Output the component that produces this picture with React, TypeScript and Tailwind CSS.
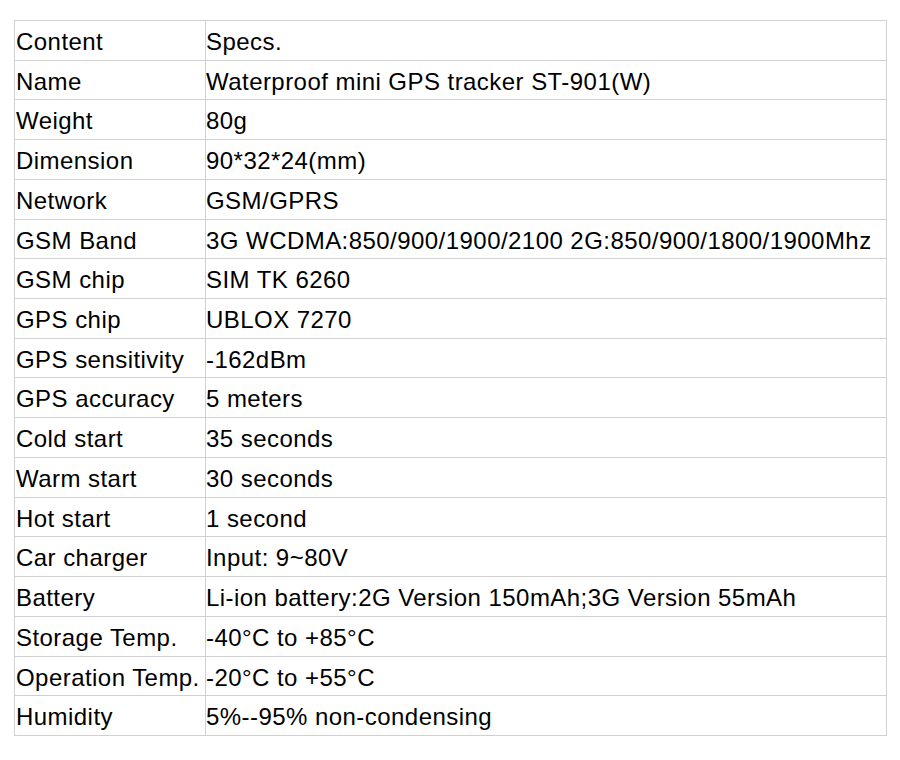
const rows: [string, string][] = [
  ["Content", "Specs."],
  ["Name", "Waterproof mini GPS tracker ST-901(W)"],
  ["Weight", "80g"],
  ["Dimension", "90*32*24(mm)"],
  ["Network", "GSM/GPRS"],
  ["GSM Band", "3G WCDMA:850/900/1900/2100 2G:850/900/1800/1900Mhz"],
  ["GSM chip", "SIM TK 6260"],
  ["GPS chip", "UBLOX 7270"],
  ["GPS sensitivity", "-162dBm"],
  ["GPS accuracy", "5 meters"],
  ["Cold start", "35 seconds"],
  ["Warm start", "30 seconds"],
  ["Hot start", "1 second"],
  ["Car charger", "Input: 9~80V"],
  ["Battery", "Li-ion battery:2G Version 150mAh;3G Version 55mAh"],
  ["Storage Temp.", "-40°C to +85°C"],
  ["Operation Temp.", "-20°C to +55°C"],
  ["Humidity", "5%--95% non-condensing"],
];

const App = () => {
  return (
    <div className="w-[900px] h-[760px] bg-white pt-[20px] pl-[14px] font-['Liberation_Sans',Arial,sans-serif] text-black">
      <table className="border-collapse w-[873px] table-fixed">
        <colgroup>
          <col className="w-[191px]" />
          <col />
        </colgroup>
        <tbody>
          {rows.map(([label, value]) => (
            <tr key={label} className="h-[39.72px]">
              <td className="border border-[#d0d0d0] align-top pt-[9px] pl-[1px] text-[24px] leading-6 tracking-[0.45px] whitespace-nowrap overflow-hidden">
                {label}
              </td>
              <td className="border border-[#d0d0d0] align-top pt-[9px] pl-[0px] text-[24px] leading-6 tracking-[0.45px] whitespace-nowrap overflow-hidden">
                {value}
              </td>
            </tr>
          ))}
        </tbody>
      </table>
    </div>
  );
};

export default App;
